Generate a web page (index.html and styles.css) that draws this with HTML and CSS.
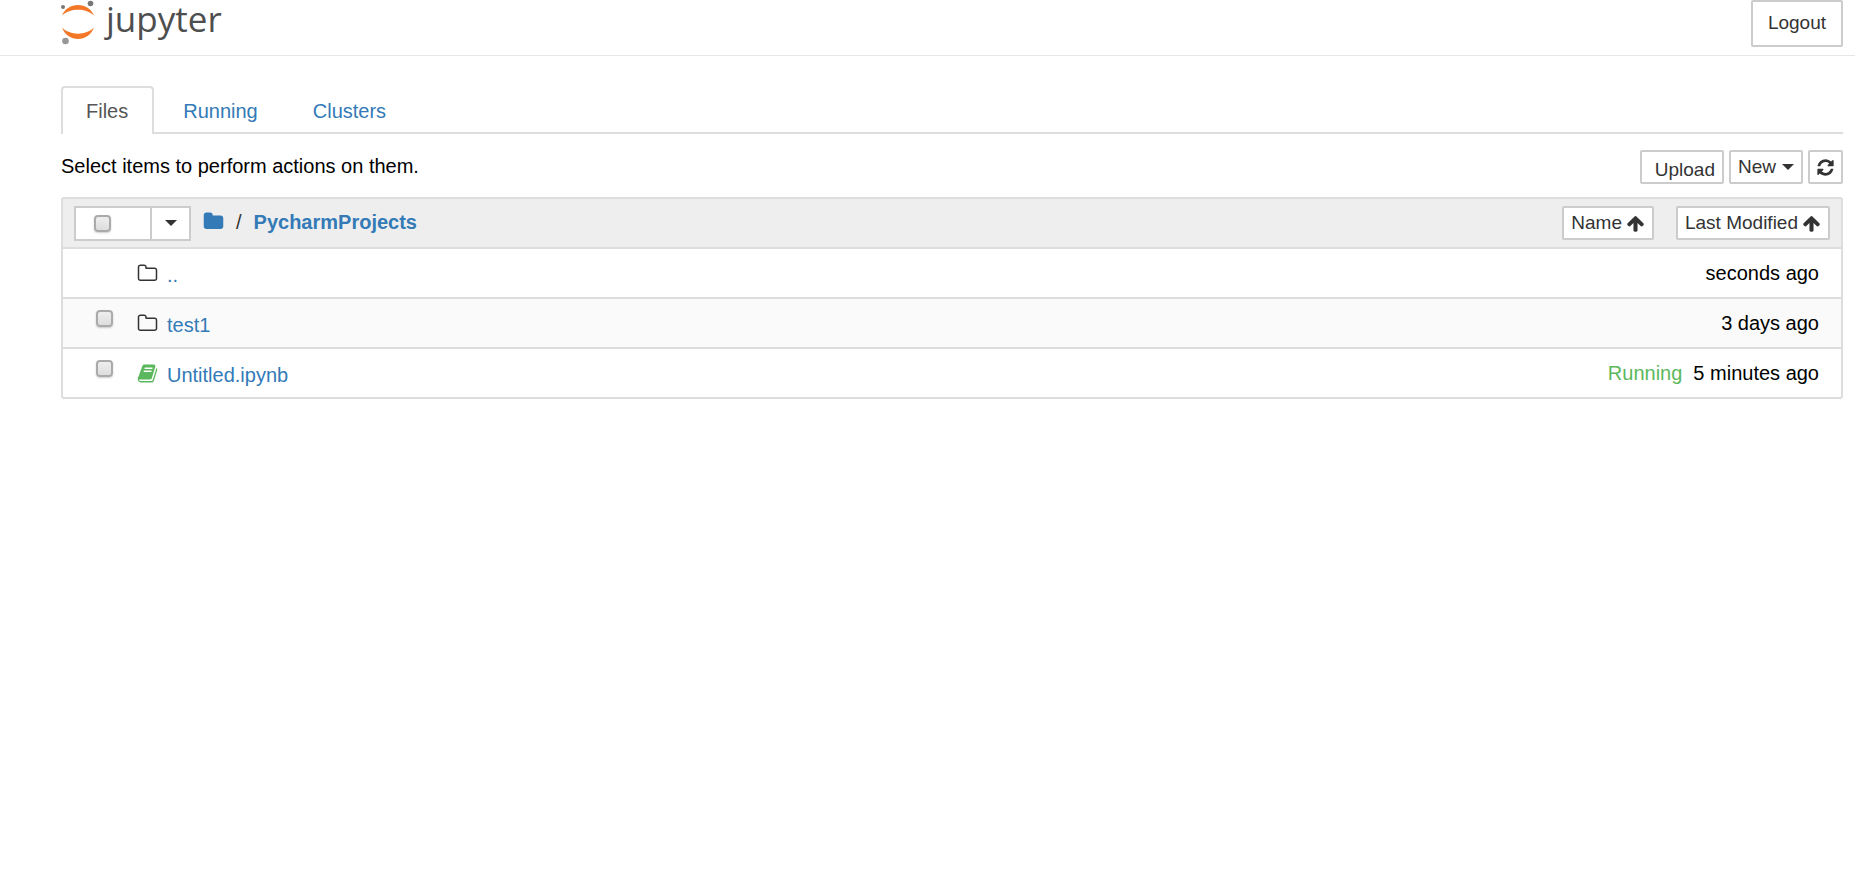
FILE: index.html
```
<!DOCTYPE html>
<html lang="en">

<head>
    <meta charset="UTF-8">
    <meta name="viewport" content="width=device-width, initial-scale=1.0">
    <title>Jupyter</title>

    <link rel="stylesheet" href="styles.css">
</head>

<body>

    <!-- Shared icons -->
    <svg class="sprite" aria-hidden="true">
        <symbol id="folder" viewBox="0 0 1792 1792">
            <path d="M1728 608v704q0 92-66 158t-158 66h-1216q-92 0-158-66t-66-158v-960q0-92 66-158t158-66h320q92 0 158 66t66 158v32h672q92 0 158 66t66 158z" />
        </symbol>
        <symbol id="folder-open" viewBox="0 0 1792 1792">
            <path d="M1600 1312v-704q0-40-28-68t-68-28h-704q-40 0-68-28t-28-68v-64q0-40-28-68t-68-28h-320q-40 0-68 28t-28 68v960q0 40 28 68t68 28h1216q40 0 68-28t28-68zm128-704v704q0 92-66 158t-158 66h-1216q-92 0-158-66t-66-158v-960q0-92 66-158t158-66h320q92 0 158 66t66 158v32h672q92 0 158 66t66 158z" />
        </symbol>
        <symbol id="book" viewBox="0 0 1792 1792">
            <path d="M1703 478q40 57 18 129l-275 906q-19 64-76.5 107.5t-122.5 43.5h-923q-77 0-148.5-53.5t-99.5-131.5q-24-67-2-127 0-4 3-27t4-37q1-8-3-21.5t-3-19.5q2-11 8-21t16.5-23.5 16.5-23.5q23-38 45-91.5t30-91.5q3-10 .5-30t-.5-28q3-11 17-28t17-23q21-36 42-92t25-90q1-9-2.5-32t.5-28q4-13 22-30.5t22-22.5q19-26 42.5-84.5t27.5-96.5q1-8-3-25.5t-2-26.5q2-8 9-18t18-23 17-21q8-12 16.5-30.5t15-35 16-36 19.5-32 26.5-23.5 36-11.5 47.5 5.5l-1 3q38-9 51-9h761q74 0 114 56t18 130l-274 906q-36 119-71.5 153.5t-128.5 34.5h-869q-27 0-38 15-11 16-1 43 24 70 144 70h923q29 0 56-15.5t35-41.5l300-987q7-22 5-57 38 15 59 43zm-1064 2q-4 13 2 22.5t20 9.5h608q13 0 25.5-9.5t16.5-22.5l21-64q4-13-2-22.5t-20-9.5h-608q-13 0-25.5 9.5t-16.5 22.5zm-83 256q-4 13 2 22.5t20 9.5h608q13 0 25.5-9.5t16.5-22.5l21-64q4-13-2-22.5t-20-9.5h-608q-13 0-25.5 9.5t-16.5 22.5z" />
        </symbol>
        <symbol id="refresh" viewBox="0 0 1792 1792">
            <path d="M1639 1056q0 5-1 7-64 268-268 434.5t-478 166.5q-146 0-282.5-55t-243.5-157l-129 129q-19 19-45 19t-45-19-19-45v-448q0-26 19-45t45-19h448q26 0 45 19t19 45-19 45l-137 137q71 66 161 102t187 36q134 0 250-65t186-179q11-17 53-117 8-23 30-23h192q13 0 22.5 9.5t9.5 22.5zm25-800v448q0 26-19 45t-45 19h-448q-26 0-45-19t-19-45 19-45l138-138q-148-137-349-137-134 0-250 65t-186 179q-11 17-53 117-8 23-30 23h-199q-13 0-22.5-9.5t-9.5-22.5v-7q65-268 270-434.5t480-166.5q146 0 284 55.5t245 156.5l130-129q19-19 45-19t45 19 19 45z" />
        </symbol>
        <symbol id="arrow-up" viewBox="0 0 1792 1792">
            <path d="M1675 971q0 51-37 90l-75 75q-38 38-91 38-54 0-90-38l-294-293v704q0 52-37.5 84.5t-90.5 32.5h-128q-53 0-90.5-32.5t-37.5-84.5v-704l-294 293q-36 38-90 38t-90-38l-75-75q-38-38-38-90 0-53 38-91l651-651q35-37 90-37 54 0 91 37l651 651q37 39 37 91z" />
        </symbol>
    </svg>

    <header class="header">
        <a class="logo" href="#">
            <svg class="logo-mark" viewBox="0 0 34 45" aria-hidden="true">
                <path fill="#f37726" d="M1 15.500C4 8.500 10 5 17 5s13 3.500 16 10.500C29 11.500 23 9.700 17 9.700S5 11.500 1 15.500z" />
                <path fill="#f37726" d="M1 27.500C4 35 10 39 17 39s13-4 16-11.500C29 31.500 23 33.700 17 33.700S5 31.500 1 27.500z" />
                <circle fill="#767677" cx="2" cy="7" r="2" />
                <circle fill="#767677" cx="29.500" cy="3.500" r="2.800" />
                <circle fill="#989798" cx="4.500" cy="41" r="3.300" />
            </svg>
            <span class="logo-text">jupyter</span>
        </a>
        <button class="btn logout">Logout</button>
    </header>

    <main class="container">
        <nav class="tabs">
            <a class="tab active" href="#files">Files</a>
            <a class="tab" href="#running">Running</a>
            <a class="tab" href="#clusters">Clusters</a>
        </nav>

        <div class="toolbar">
            <p class="hint">Select items to perform actions on them.</p>
            <div class="actions">
                <button class="btn upload">Upload</button>
                <button class="btn new">New <span class="caret"></span></button>
                <button class="btn refresh" aria-label="Refresh"><svg class="icon-sm"><use href="#refresh" /></svg></button>
            </div>
        </div>

        <table class="files">
            <thead>
                <tr>
                    <th colspan="2">
                        <div class="path">
                            <div class="select-all">
                                <label class="select-box"><input class="check" type="checkbox" aria-label="Select all"></label>
                                <button class="select-menu" aria-label="Select menu"><span class="caret"></span></button>
                            </div>
                            <div class="breadcrumb">
                                <a href="#" aria-label="Home"><svg class="icon"><use href="#folder" /></svg></a>
                                <span class="slash">/</span>
                                <a href="#">PycharmProjects</a>
                            </div>
                        </div>
                    </th>
                    <th>
                        <div class="sort">
                            <button class="btn">Name <svg class="icon-sm"><use href="#arrow-up" /></svg></button>
                            <button class="btn">Last Modified <svg class="icon-sm"><use href="#arrow-up" /></svg></button>
                        </div>
                    </th>
                </tr>
            </thead>
            <tbody>
                <tr>
                    <td class="pick"></td>
                    <td>
                        <div class="name">
                            <svg class="icon"><use href="#folder-open" /></svg>
                            <a href="#">..</a>
                        </div>
                    </td>
                    <td class="modified">seconds ago</td>
                </tr>
                <tr>
                    <td class="pick"><input class="check" type="checkbox" aria-label="test1"></td>
                    <td>
                        <div class="name">
                            <svg class="icon"><use href="#folder-open" /></svg>
                            <a href="#">test1</a>
                        </div>
                    </td>
                    <td class="modified">3 days ago</td>
                </tr>
                <tr>
                    <td class="pick"><input class="check" type="checkbox" aria-label="Untitled.ipynb"></td>
                    <td>
                        <div class="name">
                            <svg class="icon notebook"><use href="#book" /></svg>
                            <a href="#">Untitled.ipynb</a>
                        </div>
                    </td>
                    <td class="modified"><span class="status">Running</span>5 minutes ago</td>
                </tr>
            </tbody>
        </table>
    </main>

</body>

</html>
```

FILE: styles.css
```
* {
    margin: 0;
    padding: 0;
    box-sizing: border-box;
}

body {
    background-color: #fff;
    color: #000;
    font-family: "Liberation Sans", Arial, sans-serif;
    font-size: 20px;
    line-height: 28px;
}

a {
    color: #337ab7;
    text-decoration: none;
}

button {
    font-family: inherit;
    cursor: pointer;
}

.sprite {
    display: none;
}

.icon {
    width: 21px;
    height: 21px;
    fill: currentColor;
}

.icon-sm {
    width: 19px;
    height: 19px;
    fill: currentColor;
}

.caret {
    border-top: 6px solid #333;
    border-left: 6px solid transparent;
    border-right: 6px solid transparent;
}

.btn {
    display: flex;
    align-items: center;
    gap: 4px;
    height: 34px;
    padding: 0 7px;
    border: 2px solid #ccc;
    border-radius: 2px;
    background-color: #fff;
    color: #333;
    font-size: 19px;
    line-height: 28px;
}

.header {
    display: flex;
    justify-content: space-between;
    align-items: flex-start;
    height: 56px;
    padding: 0 12px 0 61px;
    border-bottom: 1px solid #e7e7e7;
}

.logo {
    display: flex;
    gap: 11px;
    color: #4e4e4e;
}

.logo-mark {
    width: 34px;
    height: 45px;
}

.logo-text {
    font-family: "Open Sans", sans-serif;
    font-size: 35px;
    font-weight: 500;
    line-height: 38px;
}

.logout {
    height: 47px;
    padding: 0 15px 2px;
}

.container {
    padding: 30px 12px 0 61px;
}

.tabs {
    display: flex;
    gap: 4px;
    border-bottom: 2px solid #ddd;
}

.tab {
    padding: 9px 24px 7px 23px;
    border: 2px solid transparent;
    border-bottom: none;
    border-radius: 4px 4px 0 0;
}

.tab.active {
    margin-bottom: -2px;
    border-color: #ddd;
    background-color: #fff;
    color: #555;
}

.toolbar {
    display: flex;
    justify-content: space-between;
    padding: 16px 0 13px;
}

.hint {
    padding-top: 2px;
}

.actions {
    display: flex;
    gap: 5px;
}

.new {
    gap: 6px;
}

.upload {
    padding: 6px 7px 0 13px;
}

.refresh {
    padding: 0 6px;
}

/* File list */
.files {
    width: 100%;
    border: 2px solid #ddd;
    border-radius: 3px;
    border-spacing: 0;
}

.files th {
    height: 48px;
    padding: 0 11px;
    background-color: #eee;
}

.files td {
    height: 50px;
    border-top: 2px solid #ddd;
}

.files tbody tr:nth-child(even) {
    background-color: #fafafa;
}

.path {
    display: flex;
    align-items: center;
    gap: 12px;
}

.select-all {
    display: flex;
    height: 35px;
    border: 2px solid #ccc;
    background-color: #fff;
}

.select-box {
    display: flex;
    align-items: center;
    width: 74px;
    padding-left: 18px;
}

.select-menu {
    display: flex;
    justify-content: center;
    align-items: center;
    width: 39px;
    border: none;
    border-left: 2px solid #ccc;
    background-color: #fff;
}

.check {
    appearance: none;
    width: 17px;
    height: 17px;
    border: 2px solid #aaa;
    border-radius: 4px;
    background: linear-gradient(#eee, #ddd);
    box-shadow: 0 1px 2px rgba(0, 0, 0, 0.2);
}

.breadcrumb {
    display: flex;
    align-items: center;
    gap: 12px;
    padding-bottom: 3px;
}

.breadcrumb .icon {
    display: block;
}

.slash {
    color: #333;
    font-weight: normal;
}

.sort {
    display: flex;
    justify-content: flex-end;
    gap: 22px;
}

.files .pick {
    width: 74px;
    padding: 11px 0 0 33px;
    line-height: 0;
    vertical-align: top;
}

.name {
    display: flex;
    align-items: center;
    gap: 9px;
    padding-top: 4px;
    color: #333;
}

.name .icon {
    margin-bottom: 4px;
}

.name .notebook {
    color: #5cb85c;
}

.files .modified {
    padding-right: 22px;
    text-align: right;
}

.status {
    margin-right: 11px;
    color: #5cb85c;
}
```
